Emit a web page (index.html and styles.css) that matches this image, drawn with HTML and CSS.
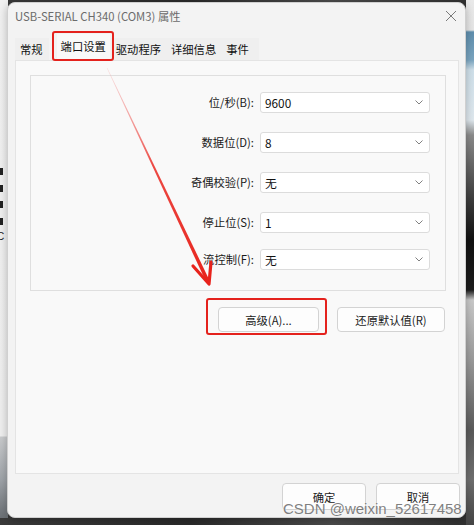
FILE: index.html
```html
<!DOCTYPE html>
<html lang="zh">
<head>
  <meta charset="UTF-8">
  <meta name="viewport" content="width=device-width, initial-scale=1.0">
  <title>USB-SERIAL CH340 (COM3) 属性</title>
  <link rel="stylesheet" href="styles.css">
</head>
<body>
  <!-- desktop behind the dialog -->
  <div class="desk-left">
    <i></i><i></i><i></i><i></i><b>C</b>
  </div>
  <div class="desk-right"></div>

  <div class="window">
    <div class="titlebar">
      <span class="title">USB-SERIAL CH340 (COM3) 属性</span>
      <svg class="close" width="12" height="12" viewBox="0 0 12 12">
        <path d="M1 1 L11 11 M11 1 L1 11" stroke="#7a7a7a" stroke-width="1" fill="none"/>
      </svg>
    </div>

    <div class="tabs">
      <span class="tab">常规</span>
      <span class="tab active marked">端口设置</span>
      <span class="tab">驱动程序</span>
      <span class="tab">详细信息</span>
      <span class="tab">事件</span>
    </div>

    <div class="panel">
      <div class="group">
        <div class="row">
          <label>位/秒(B):</label>
          <div class="select">9600<svg width="8" height="5" viewBox="0 0 8 5"><path d="M0.5 0.5 L4 4 L7.5 0.5" stroke="#808080" fill="none"/></svg></div>
        </div>
        <div class="row">
          <label>数据位(D):</label>
          <div class="select">8<svg width="8" height="5" viewBox="0 0 8 5"><path d="M0.5 0.5 L4 4 L7.5 0.5" stroke="#808080" fill="none"/></svg></div>
        </div>
        <div class="row">
          <label>奇偶校验(P):</label>
          <div class="select">无<svg width="8" height="5" viewBox="0 0 8 5"><path d="M0.5 0.5 L4 4 L7.5 0.5" stroke="#808080" fill="none"/></svg></div>
        </div>
        <div class="row">
          <label>停止位(S):</label>
          <div class="select">1<svg width="8" height="5" viewBox="0 0 8 5"><path d="M0.5 0.5 L4 4 L7.5 0.5" stroke="#808080" fill="none"/></svg></div>
        </div>
        <div class="row">
          <label>流控制(F):</label>
          <div class="select">无<svg width="8" height="5" viewBox="0 0 8 5"><path d="M0.5 0.5 L4 4 L7.5 0.5" stroke="#808080" fill="none"/></svg></div>
        </div>
      </div>

      <div class="actions">
        <button class="btn advanced marked">高级(A)...</button>
        <button class="btn restore">还原默认值(R)</button>
      </div>
    </div>

    <div class="footer">
      <button class="btn ok">确定</button>
      <button class="btn cancel">取消</button>
    </div>
  </div>

  <!-- annotation arrow: from the tab down to the advanced button -->
  <svg class="arrow" width="474" height="525" viewBox="0 0 474 525">
    <defs>
      <linearGradient id="shaft" x1="107" y1="68" x2="208" y2="282" gradientUnits="userSpaceOnUse">
        <stop offset="0" stop-color="#f4b4b4" stop-opacity="0.4"/>
        <stop offset="0.45" stop-color="#ec4a44"/>
        <stop offset="1" stop-color="#e8231c"/>
      </linearGradient>
    </defs>
    <polygon points="106.8,68 107.4,68 209.8,281 206.4,282.6" fill="url(#shaft)"/>
    <path d="M193 266 L209 284 L211 262" stroke="#e8231c" stroke-width="3.2" fill="none" stroke-linecap="round" stroke-linejoin="round"/>
  </svg>

  <div class="watermark">CSDN @weixin_52617458</div>
</body>
</html>
```

FILE: styles.css
```css
* {
  margin: 0;
  padding: 0;
  box-sizing: border-box;
}
body {
  position: relative;
  width: 474px;
  height: 525px;
  overflow: hidden;
  padding: 2px 8px 7px 7px;
  background: linear-gradient(to right, #3a3a3a, #2a2a2a 40%, #4a4a4a 70%, #2f2f2f);
  font-family: "Noto Sans CJK SC", sans-serif;
  font-size: 11.3px;
  color: #1a1a1a;
}

/* desktop */
.desk-left {
  position: absolute;
  left: 0;
  top: 0;
  width: 8px;
  height: 518px;
  background: linear-gradient(to bottom, #f1f1f1 0, #efefef 436px, #c9cbcd 437px, #9ea3a8 480px, #6b7075 518px);
}
.desk-left i {
  position: absolute;
  left: 0;
  width: 3px;
  height: 7px;
  background: #222;
}
.desk-left i:nth-child(1) { top: 168px; }
.desk-left i:nth-child(2) { top: 185px; }
.desk-left i:nth-child(3) { top: 201px; }
.desk-left i:nth-child(4) { top: 218px; }
.desk-left b {
  position: absolute;
  left: -3px;
  top: 231px;
  font: 10px "Liberation Sans", sans-serif;
  color: #222;
}
.desk-right {
  position: absolute;
  right: 0;
  top: 0;
  width: 8px;
  height: 525px;
  background: linear-gradient(to bottom, #e9e9e9 0, #e6e6e6 30px, #5f8fae 32px, #7aa5c0 60px, #cfe0ea 70px, #dfe8ee 120px, #8b8b8b 135px, #3c3c3c 200px, #111 240px, #1c1c1c 290px, #c9c9c9 300px, #9a9a9a 360px, #5a5a5a 430px, #6e6e6e 480px, #444 525px);
}

/* dialog window */
.window {
  position: relative;
  width: 459px;
  height: 516px;
  display: flex;
  flex-direction: column;
  background-color: #f3f3f3;
  border: 1px solid #d0d0d0;
  border-radius: 8px;
  box-shadow: 0 2px 8px rgba(0 0 0 / .25);
  overflow: hidden;
}
.titlebar {
  height: 26px;
  display: flex;
  align-items: center;
  justify-content: space-between;
  padding: 0 8px 0 7px;
}
.title {
  font-size: 11.3px;
  color: #6b6b6b;
}

.tabs {
  height: 31px;
  display: flex;
  align-items: flex-end;
  padding-left: 7px;
}
.tab {
  height: 22px;
  line-height: 22px;
  padding: 0 5px;
  background-color: #efefef;
  color: #111;
}
.tab:first-child {
  padding-right: 6px;
}
.tab.active {
  margin: 0 1px 0 8px;
  padding: 0 4px;
  height: 26px;
  line-height: 24px;
  background-color: #f9f9f9;
}
.tab:last-child {
  padding-right: 10px;
}

/* red annotation boxes */
.marked {
  position: relative;
}
.marked::after {
  content: "";
  position: absolute;
  border: 2.5px solid #e4221d;
  border-radius: 3px;
}
.tab.marked::after {
  left: -5px;
  right: -4px;
  top: -3px;
  bottom: -1px;
}
.btn.marked::after {
  left: -13px;
  right: -9px;
  top: -10px;
  bottom: -4px;
}

.panel {
  flex: 1;
  margin: 0 6px 0 7px;
  padding: 14px 12px 0 14px;
  background-color: #f9f9f9;
  border: 1px solid #e4e4e4;
}
.group {
  display: flex;
  flex-direction: column;
  gap: 20px;
  padding: 16px 15px 21px 0;
  border: 1px solid #dfdfdf;
}
.row {
  height: 20px;
  display: flex;
  align-items: center;
  justify-content: flex-end;
  gap: 6px;
}
.row:last-child {
  margin-top: -3px;
}
.row label {
  color: #1a1a1a;
}
.select {
  width: 170px;
  height: 21px;
  display: flex;
  align-items: center;
  justify-content: space-between;
  padding: 0 6px 0 4px;
  background-color: #fff;
  border: 1px solid #dcdcdc;
  border-radius: 3px;
  color: #111;
  font-size: 11.8px;
}

.btn {
  height: 25px;
  font-family: inherit;
  font-size: 11.3px;
  color: #1a1a1a;
  background-color: #fdfdfd;
  border: 1px solid #d3d3d3;
  border-radius: 4px;
}
.actions {
  display: flex;
  justify-content: flex-end;
  gap: 18px;
  margin-top: 16px;
  padding-right: 1px;
}
.advanced {
  width: 101px;
}
.restore {
  width: 108px;
}

.footer {
  height: 43px;
  display: flex;
  justify-content: flex-end;
  gap: 10px;
  padding: 9px 5px 0 0;
}
.footer .btn {
  width: 84px;
  height: 27px;
}

.arrow {
  position: absolute;
  left: 0;
  top: 0;
  pointer-events: none;
}
.watermark {
  position: absolute;
  left: 283px;
  top: 500px;
  font: 15px "Liberation Sans", sans-serif;
  color: rgba(105 105 105 / .85);
  text-shadow: 0 0 1px rgba(255 255 255 / .6);
  white-space: nowrap;
}
```
